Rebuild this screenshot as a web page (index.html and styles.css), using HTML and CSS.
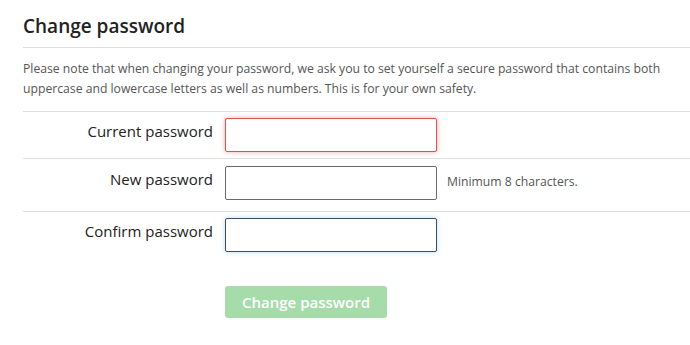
FILE: index.html
```html
<!DOCTYPE html>
<html lang="en">
<head>
<meta charset="utf-8">
<title>Change password</title>
<link rel="stylesheet" href="styles.css">
</head>
<body>
<div class="page">
  <h1 class="title">Change password</h1>
  <p class="intro">Please note that when changing your password, we ask you to set yourself a secure password that contains both uppercase and lowercase letters as well as numbers. This is for your own safety.</p>
  <form class="form">
    <div class="row row-first">
      <label class="label" for="cur">Current password</label>
      <input class="field field-error" id="cur" type="password">
    </div>
    <div class="row row-second">
      <label class="label" for="new">New password</label>
      <input class="field" id="new" type="password">
      <span class="hint">Minimum 8 characters.</span>
    </div>
    <div class="row row-last">
      <label class="label" for="conf">Confirm password</label>
      <input class="field field-focus" id="conf" type="password">
    </div>
    <div class="actions">
      <button class="btn" type="button">Change password</button>
    </div>
  </form>
</div>
</body>
</html>
```

FILE: styles.css
```css
html, body {
  margin: 0;
  padding: 0;
  background: #fff;
}
body {
  font-family: "Open Sans", "Liberation Sans", sans-serif;
  color: #222;
}
.page {
  padding-left: 23px;
}
.title {
  margin: 0;
  padding: 13px 0 8px;
  font-size: 19px;
  line-height: 26px;
  font-weight: 600;
  color: #222;
  border-bottom: 1px solid #dedede;
}
.intro {
  margin: 0;
  padding: 11px 0 13px;
  font-size: 12.2px;
  line-height: 19.5px;
  color: #555;
  border-bottom: 1px solid #dedede;
}
.form {
  margin: 0;
}
.row {
  display: flex;
  align-items: flex-start;
  gap: 12px;
  border-bottom: 1px solid #dedede;
}
.row-first {
  padding: 6px 0 6px;
}
.row-second {
  padding: 7px 0 11px;
}
.row-last {
  padding: 6px 0 0;
  border-bottom: none;
}
.label {
  width: 190px;
  flex: none;
  text-align: right;
  font-size: 15px;
  line-height: 20px;
  padding-top: 3px;
  color: #222;
}
.field {
  box-sizing: border-box;
  width: 212px;
  height: 34px;
  margin: 0;
  border: 1px solid #6b6b6b;
  border-radius: 2px;
  background: #fff;
  font: inherit;
  outline: none;
}
.field-error {
  border-color: #d9534f;
  box-shadow: 0 0 5px rgba(230, 60, 60, 0.45);
}
.field-focus {
  border-color: #3f4d5c;
  box-shadow: 0 0 5px rgba(90, 170, 230, 0.45);
}
.hint {
  margin-left: -2px;
  font-size: 12.2px;
  line-height: 20px;
  padding-top: 6px;
  color: #555;
}
.actions {
  padding: 34px 0 0 202px;
}
.btn {
  width: 162px;
  height: 32px;
  margin: 0;
  border: none;
  border-radius: 3px;
  background: #a6dcaa;
  color: #fff;
  font-family: "Open Sans", "Liberation Sans", sans-serif;
  font-size: 15px;
  font-weight: 600;
  cursor: pointer;
}
```
